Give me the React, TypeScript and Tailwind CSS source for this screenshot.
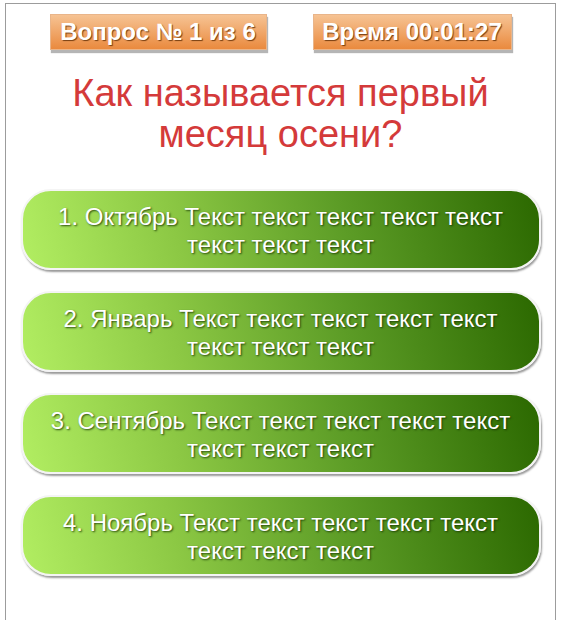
import React from "react";

const answers = [
  "1. Октябрь",
  "2. Январь",
  "3. Сентябрь",
  "4. Ноябрь",
];

function Badge({ children, w }: { children: React.ReactNode; w: string }) {
  return (
    <div
      className={`${w} h-[36px] flex items-center justify-center border border-[#e9b58a] bg-[linear-gradient(to_bottom,#f6c393,#ea8a3e)] shadow-[1px_3px_1px_#b5b5b5] text-white font-bold text-[24px] leading-none [text-shadow:1px_1px_1px_rgba(90,40,0,0.8)]`}
    >
      {children}
    </div>
  );
}

export default function App() {
  return (
    <div className="w-[564px] h-[620px] overflow-hidden bg-white pt-[3px] pl-[5px] pr-[8px] [font-family:'Liberation_Sans',Arial,sans-serif]">
      <div className="border-t border-l border-r border-[#9c9c9c] h-[660px] flex flex-col items-center">
        <div className="flex justify-center gap-[46px] mt-[10px]">
          <Badge w="w-[217px]">Вопрос № 1 из 6</Badge>
          <Badge w="w-[199px]">Время 00:01:27</Badge>
        </div>
        <div className="mt-[23px] text-[#d43a3a] text-[38px] leading-[41px] text-center w-[490px]">
          Как называется первый
          <br />
          месяц осени?
        </div>
        <div className="mt-[34px] flex flex-col gap-[21px]">
          {answers.map((a, i) => (
            <div
              key={i}
              className="w-[520px] h-[81px] rounded-[30px] border-2 border-[#f4f4f4] shadow-[1px_2px_2px_#9a9a9a] bg-[linear-gradient(75deg,#b2ee62_0%,#8cc844_30%,#5c9c26_62%,#2b6800_100%)] flex items-center justify-center pt-[2px] text-center text-white text-[24px] leading-[28px] [text-shadow:1px_1px_2px_rgba(20,50,0,0.85)]"
            >
              <span>
                {a} Текст текст текст текст текст
                <br />
                текст текст текст
              </span>
            </div>
          ))}
        </div>
      </div>
    </div>
  );
}
